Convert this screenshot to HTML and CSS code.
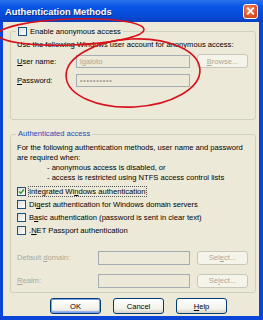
FILE: index.html
```html
<!DOCTYPE html>
<html>
<head>
<meta charset="utf-8">
<link rel="stylesheet" href="styles.css">
</head>
<body>
<div class="window">
  <div class="titlebar">
    <span class="title">Authentication Methods</span>
    <span class="close"><svg width="14" height="14" viewBox="0 0 14 14"><path d="M4 4 L10 10 M10 4 L4 10" stroke="#fff" stroke-width="1.8" stroke-linecap="square"/></svg></span>
  </div>
  <div class="client">
    <fieldset class="group g1">
      <legend class="legend-check"><span class="cb"></span><span>Enable anonymous access</span></legend>
      <div class="line intro">Use the following Windows user account for anonymous access:</div>
      <div class="row r-user">
        <span class="lbl"><u>U</u>ser name:</span>
        <span class="field dis-text">lgaloto</span>
        <span class="btn dis"><u>B</u>rowse...</span>
      </div>
      <div class="row r-pass">
        <span class="lbl"><u>P</u>assword:</span>
        <span class="field dots">••••••••••</span>
      </div>
    </fieldset>
    <fieldset class="group g2">
      <legend class="legend-text">Authenticated access</legend>
      <div class="para">For the following authentication methods, user name and password<br>are required when:</div>
      <div class="bullets">- anonymous access is disabled, or<br>- access is restricted using NTFS access control lists</div>
      <div class="checks">
        <div class="chk"><span class="cb on"><svg width="7" height="7" viewBox="0 0 7 7"><path d="M1 3.5 L2.8 5.3 L6 1.5" stroke="#21a121" stroke-width="1.4" fill="none"/></svg></span><span class="focus">Integrated Wi<u>n</u>dows authentication</span></div>
        <div class="chk"><span class="cb"></span><span>Di<u>g</u>est authentication for Windows domain servers</span></div>
        <div class="chk"><span class="cb"></span><span>B<u>a</u>sic authentication (password is sent in clear text)</span></div>
        <div class="chk"><span class="cb"></span><span>.<u>N</u>ET Passport authentication</span></div>
      </div>
      <div class="row r-dom">
        <span class="lbl2 dis-text">Default <u>d</u>omain:</span>
        <span class="field f2"></span>
        <span class="btn dis">Sel<u>e</u>ct...</span>
      </div>
      <div class="row r-realm">
        <span class="lbl2 dis-text"><u>R</u>ealm:</span>
        <span class="field f2"></span>
        <span class="btn dis">Se<u>l</u>ect...</span>
      </div>
    </fieldset>
    <div class="buttons">
      <span class="btn def">OK</span>
      <span class="btn">Cancel</span>
      <span class="btn"><u>H</u>elp</span>
    </div>
  </div>
  <svg class="marks" width="263" height="320" viewBox="0 0 263 320">
    <ellipse cx="71" cy="32" rx="73" ry="13" fill="none" stroke="#d8101a" stroke-width="1.6" transform="rotate(-2 71 32)"/>
    <ellipse cx="133" cy="73" rx="67" ry="34" fill="none" stroke="#d8101a" stroke-width="1.6" transform="rotate(-3 133 73)"/>
  </svg>
</div>
</body>
</html>
```
FILE: styles.css
```css
* { box-sizing: border-box; }
html, body { margin: 0; padding: 0; }
body {
  width: 263px; height: 320px; overflow: hidden;
  font-family: "Liberation Sans", Arial, sans-serif;
  font-size: 7.6px; color: #000;
}
.window {
  position: relative;
  width: 263px; height: 320px;
  background: #0a45d8;
  display: flex; flex-direction: column;
}
.titlebar {
  height: 22px; flex: none;
  background: linear-gradient(#2a72ee 0%, #0a55e6 30%, #064bd8 70%, #0840c0 100%);
  display: flex; align-items: center; justify-content: space-between;
  padding: 0 5px 0 5px;
}
.title {
  color: #fff; font-weight: bold; font-size: 9.4px;
  font-family: "Liberation Sans", Arial, sans-serif;
  text-shadow: 1px 1px 0 #0a2a80;
}
.close {
  width: 15px; height: 15px; border: 1px solid #fff; border-radius: 3px;
  background: radial-gradient(circle at 40% 35%, #f09070 0%, #e0562a 55%, #c43c14 100%);
  display: flex; align-items: center; justify-content: center;
}
.client {
  flex: 1; margin: 0 4px 4px 3px;
  background: #ece9d8;
  padding: 3px 3px 0 7px;
  display: flex; flex-direction: column;
}
.group {
  margin: 0; border: 1px solid #d0d0bf; border-radius: 3px;
  padding: 0 0 0 6px;
  min-width: 0;
}
.g1 { height: 95px; }
.g2 { height: 164px; margin-top: 9px; }
legend { padding: 0 2px; margin-left: -1px; }
.legend-check { display: flex; align-items: center; gap: 3px; height: 12px; }
.legend-text { color: #1c4ab8; height: 10px; line-height: 10px; }
.cb {
  width: 9px; height: 9px; border: 1px solid #1c5180;
  background: linear-gradient(135deg, #dcdcd6, #fff);
  display: inline-flex; align-items: center; justify-content: center;
  flex: none;
}
.line.intro { margin-top: 3px; height: 10px; line-height: 10px; }
.row { display: flex; align-items: center; }
.r-user { margin-top: 4px; }
.r-pass { margin-top: 6px; }
.lbl { width: 59px; }
.lbl2 { width: 81px; }
.field {
  width: 114px; height: 13px; border: 1px solid #a5acb5;
  background: #ece9d8; padding-left: 3px; line-height: 11px;
}
.field.f2 { width: 92px; height: 14px; }
.dots { color: #9a9a90; letter-spacing: 0.8px; font-size: 7px; }
.dis-text { color: #aca899; }
.btn {
  width: 51px; height: 14px; margin-left: 7px;
  border: 1px solid #003c74; border-radius: 3px;
  background: linear-gradient(#fff, #f3f2ea 70%, #d6d0c5);
  display: flex; align-items: center; justify-content: center;
}
.btn.dis { border-color: #c9c7ba; color: #aca899; background: #f5f4ea; }
.btn.def { box-shadow: inset 0 0 0 1px #7fa3e8, inset 0 -1px 0 1px #98b6f0; }
.para { margin-top: 4px; line-height: 10px; }
.bullets { padding-left: 30px; line-height: 9.5px; }
.checks { margin-top: 5px; display: flex; flex-direction: column; gap: 3.5px; }
.chk { display: flex; align-items: center; gap: 3px; height: 9.5px; }
.focus { outline: 1px dotted #555; outline-offset: 0; }
.r-dom { margin-top: 15px; }
.r-realm { margin-top: 9px; }
.r-dom .btn, .r-realm .btn { margin-left: 7px; }
.buttons {
  display: flex; gap: 12px; padding-left: 40px; margin-top: 5px;
}
.buttons .btn { margin-left: 0; width: 51px; height: 16px; }
.marks { position: absolute; left: 0; top: 0; pointer-events: none; }
u { text-decoration: underline; }
```
